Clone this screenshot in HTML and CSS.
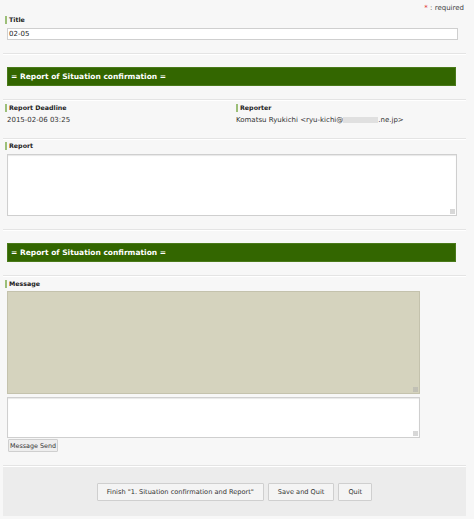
FILE: index.html
```html
<!DOCTYPE html>
<html lang="en">
<head>
<meta charset="UTF-8">
<title>Report of Situation confirmation</title>
<link rel="stylesheet" href="styles.css">
</head>
<body>
<div class="page">
    <div class="required"><span class="star">*</span> : required</div>

    <div class="block title-block">
        <div class="label">Title</div>
        <div class="field">02-05</div>
    </div>

    <div class="block head-block">
        <div class="green-bar">= Report of Situation confirmation =</div>
    </div>

    <div class="block info-block">
        <div class="col">
            <div class="label">Report Deadline</div>
            <div class="value">2015-02-06 03:25</div>
        </div>
        <div class="col">
            <div class="label">Reporter</div>
            <div class="value">Komatsu Ryukichi &lt;ryu-kichi@<span class="blur"></span>.ne.jp&gt;</div>
        </div>
    </div>

    <div class="block report-block">
        <div class="label">Report</div>
        <div class="area report-area"><span class="grip"></span></div>
    </div>

    <div class="block head-block">
        <div class="green-bar">= Report of Situation confirmation =</div>
    </div>

    <div class="block message-block">
        <div class="label">Message</div>
        <div class="area log-area"><span class="grip"></span></div>
        <div class="area msg-area"><span class="grip"></span></div>
        <button class="btn small">Message Send</button>
    </div>

    <div class="footer">
        <button class="btn">Finish "1. Situation confirmation and Report"</button>
        <button class="btn">Save and Quit</button>
        <button class="btn">Quit</button>
    </div>
</div>
</body>
</html>
```

FILE: styles.css
```css
body{
    margin:0;
    background-color:#f7f7f7;
    font-family:"DejaVu Sans", Verdana, sans-serif;
    font-size:7px;
    color:#222;
}
.page{
    width:463px;
    padding-left:3px;
}
.required{
    text-align:right;
    padding:4px 2px 0 0;
    height:11px;
    line-height:9px;
    color:#444;
}
.star{
    color:#e03030;
}
.block{
    border-bottom:1px solid #e4e4e4;
    box-shadow:0 1px 0 #fff;
}
.label{
    font-weight:bold;
    font-size:6.3px;
    line-height:8px;
    border-left:2px solid #9cbf78;
    padding-left:2px;
    margin-left:2px;
    color:#222;
}
.title-block{
    padding:1px 0 13px 4px;
}
.title-block .label{
    margin-left:-2px;
}
.field{
    width:448px;
    height:10px;
    line-height:10px;
    margin-top:4px;
    border:1px solid #cfcfcf;
    background-color:#fff;
    padding-left:1px;
}
.head-block{
    padding:13px 0 13px 4px;
}
.green-bar{
    width:444px;
    height:17px;
    line-height:17px;
    background-color:#336600;
    border:1px solid #4a7a1a;
    color:#fff;
    font-weight:bold;
    font-size:7.5px;
    padding-left:3px;
}
.info-block{
    display:flex;
    padding:4px 0 14px 0;
}
.col{
    width:231px;
}
.col + .col{
    width:auto;
}
.value{
    margin-top:4px;
    padding-left:4px;
    line-height:8px;
    color:#333;
}
.col + .col .value{
    padding-left:2px;
}
.blur{
    display:inline-block;
    width:35px;
    height:6px;
    background-color:#e0e0e0;
    vertical-align:middle;
}
.report-block{
    padding:3px 0 13px 0;
}
.area{
    position:relative;
    border:1px solid #cfcfcf;
    background-color:#fff;
    box-shadow:inset 0 1px 1px #e8e8e8;
    margin-left:4px;
}
.report-area{
    width:448px;
    height:60px;
    margin-top:4px;
}
.message-block{
    padding:4px 0 13px 0;
}
.log-area{
    width:411px;
    height:101px;
    margin-top:3px;
    background-color:#d5d3be;
    border-color:#c4c2ad;
    box-shadow:none;
}
.msg-area{
    width:411px;
    height:39px;
    margin-top:3px;
}
.grip{
    position:absolute;
    right:1px;
    bottom:1px;
    width:5px;
    height:5px;
    background-image:radial-gradient(#aaa 0.6px, transparent 0.8px);
    background-size:2px 2px;
}
.btn{
    font-family:"DejaVu Sans", Verdana, sans-serif;
    font-size:6.6px;
    color:#333;
    background-color:#f4f4f4;
    border:1px solid #cfcfcf;
    border-radius:1px;
    height:18px;
    padding:0 9px;
    margin:0 1px;
    cursor:pointer;
}
.btn.small{
    height:13px;
    font-size:6.4px;
    padding:0 1px;
    margin:1px 0 0 5px;
    background-color:#eeeeee;
}
.footer{
    margin-top:0;
    height:49px;
    background-color:#ececec;
    border-top:1px solid #fff;
    display:flex;
    justify-content:center;
    align-items:center;
    gap:2px;
    padding-right:0;
}
```
